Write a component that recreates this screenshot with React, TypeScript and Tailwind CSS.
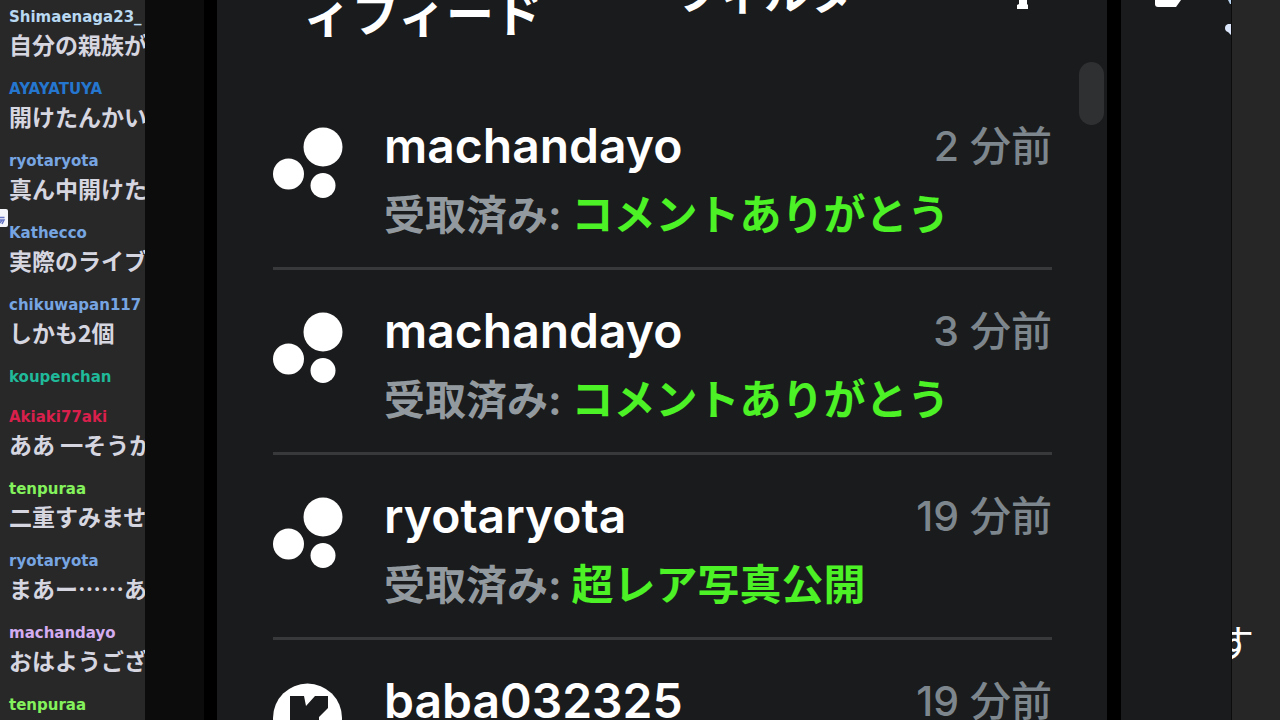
import React from "react";

type Chat = { name: string; color: string; text?: string };

const chats: Chat[] = [
  { name: "Shimaenaga23_", color: "text-[#b9d9f2]", text: "自分の親族が" },
  { name: "AYAYATUYA", color: "text-[#2576cf]", text: "開けたんかい" },
  { name: "ryotaryota", color: "text-[#76a5e2]", text: "真ん中開けた" },
  { name: "Kathecco", color: "text-[#76a5e2]", text: "実際のライブ" },
  { name: "chikuwapan117", color: "text-[#76a5e2]", text: "しかも2個" },
  { name: "koupenchan", color: "text-[#20b99a]" },
  { name: "Akiaki77aki", color: "text-[#d9204c]", text: "ああ 一そうか" },
  { name: "tenpuraa", color: "text-[#84f25c]", text: "二重すみませ" },
  { name: "ryotaryota", color: "text-[#76a5e2]", text: "まあー……あ" },
  { name: "machandayo", color: "text-[#d3acf0]", text: "おはようござ" },
  { name: "tenpuraa", color: "text-[#84f25c]" },
];

type Activity = { user: string; time: string; reward: string };

const activities: Activity[] = [
  { user: "machandayo", time: "2 分前", reward: "コメントありがとう" },
  { user: "machandayo", time: "3 分前", reward: "コメントありがとう" },
  { user: "ryotaryota", time: "19 分前", reward: "超レア写真公開" },
];

const latest = { user: "baba032325", time: "19 分前" };

function PointsIcon() {
  return (
    <svg viewBox="0 0 72 72" className="size-[72px]" fill="#fff" aria-hidden="true">
      <circle cx="50" cy="20" r="19.5" />
      <circle cx="15.5" cy="47" r="15.5" />
      <circle cx="50" cy="58.5" r="12.5" />
    </svg>
  );
}

function MedalIcon() {
  return (
    <svg viewBox="0 0 72 72" className="size-[72px]" aria-hidden="true">
      <circle cx="34.5" cy="36" r="34.5" fill="#fff" />
      <path d="M17 14h14l2 10 9-10h13v12l-9 9v20H17z" fill="#1a1b1c" />
    </svg>
  );
}

function ChatColumn() {
  return (
    <aside className="relative w-[145px] shrink-0 overflow-hidden bg-[#282828] pl-[9px] pt-[5px]">
      <ul className="flex flex-col gap-4 whitespace-nowrap">
        {chats.map((c, i) => (
          <li key={i}>
            <div className={`font-['DejaVu_Sans',sans-serif] text-[15px] leading-6 font-bold ${c.color}`}>{c.name}</div>
            {c.text && (
              <p className="pb-[2px] font-['Noto_Sans_CJK_JP',sans-serif] text-[23px] leading-[30px] font-bold text-[#d6d6e0]">
                {c.text}
              </p>
            )}
          </li>
        ))}
      </ul>
      <svg className="absolute left-0 top-[209px] h-[18px] w-2" viewBox="0 0 8 18" aria-hidden="true">
        <path d="M0 0h6q2 0 2 2v14q0 2-2 2H0z" fill="#f4f5fa" />
        <path d="M0 8.5h4.500M0 11h4l-2 4M0 14l2-3" stroke="#6473c4" strokeWidth="1.5" fill="none" />
      </svg>
    </aside>
  );
}

function RowHeading({ user, time }: { user: string; time: string }) {
  return (
    <div className="flex items-center justify-between leading-[68px]">
      <span className="text-[48px] font-semibold text-white">{user}</span>
      <time className="text-[41px] font-medium text-[#7d868c]">{time}</time>
    </div>
  );
}

function ActivityRow({ item }: { item: Activity }) {
  return (
    <li className="flex h-[185px] shrink-0 gap-[39px] border-b-[3px] border-[#38393b] pt-[27px]">
      <div className="pt-[15px]">
        <PointsIcon />
      </div>
      <div className="flex-1 whitespace-nowrap">
        <RowHeading user={item.user} time={item.time} />
        <p className="text-[41px] leading-[70px] font-bold text-[#939a9f]">
          受取済み: <span className="text-[42px] text-[#4cf126]">{item.reward}</span>
        </p>
      </div>
    </li>
  );
}

function Feed() {
  return (
    <main className="relative flex min-w-0 flex-1 flex-col overflow-hidden bg-[#1a1b1c]">
      <header className="flex h-[85px] shrink-0 justify-between whitespace-nowrap pl-[86px] pr-[78px] font-bold text-white">
        <h1 className="-mt-[9px] text-[48px] leading-[48px]">ィフィード</h1>
        <div className="flex">
          <button className="-mt-[30px] h-[48px] w-[342px] text-left text-[45px] leading-[48px]">フィルタ</button>
          <svg className="h-3 w-3" viewBox="0 0 12 12" fill="#fff" aria-hidden="true">
            <path d="M2 0h8v4l1 1v4H0V5l2-1z" />
          </svg>
        </div>
      </header>
      <ul className="flex flex-col pl-[56px] pr-[55px]">
        {activities.map((a, i) => (
          <ActivityRow key={i} item={a} />
        ))}
        <li className="flex shrink-0 gap-[39px] pt-[27px]">
          <div className="pt-[15px]">
            <MedalIcon />
          </div>
          <div className="flex-1 whitespace-nowrap">
            <RowHeading user={latest.user} time={latest.time} />
          </div>
        </li>
      </ul>
      <div className="absolute right-[3px] top-[62px] h-[63px] w-[25px] rounded-full bg-[#2f3031]" />
    </main>
  );
}

export default function App() {
  return (
    <div className="flex h-screen overflow-hidden bg-black font-['Inter','Noto_Sans_CJK_JP',sans-serif]">
      <ChatColumn />
      <div className="w-[59px] shrink-0 bg-[#0c0c0c]" />
      <div className="w-[13px] shrink-0 bg-black" />
      <Feed />
      <div className="w-[14px] shrink-0 bg-black" />
      <section className="w-[110px] shrink-0 bg-[#1a1b1c]">
        <svg className="h-12 w-full" viewBox="0 0 110 48" fill="#fff" aria-hidden="true">
          <path d="M34 0h26l-5 7H37q-3 0-3-3z" />
          <path d="M107 0h3v4h-1z" fill="#b9d4f0" />
          <path d="M110 24h-3q-3 1-3 4t3 4l3 3z" fill="#dbe6fa" />
        </svg>
      </section>
      <section className="flex w-[49px] shrink-0 flex-col overflow-hidden border-l border-[#0c0c0c] bg-[#262626]">
        <p className="mt-[623px] -ml-[16px] text-[38px] leading-10 text-white">す</p>
      </section>
    </div>
  );
}
